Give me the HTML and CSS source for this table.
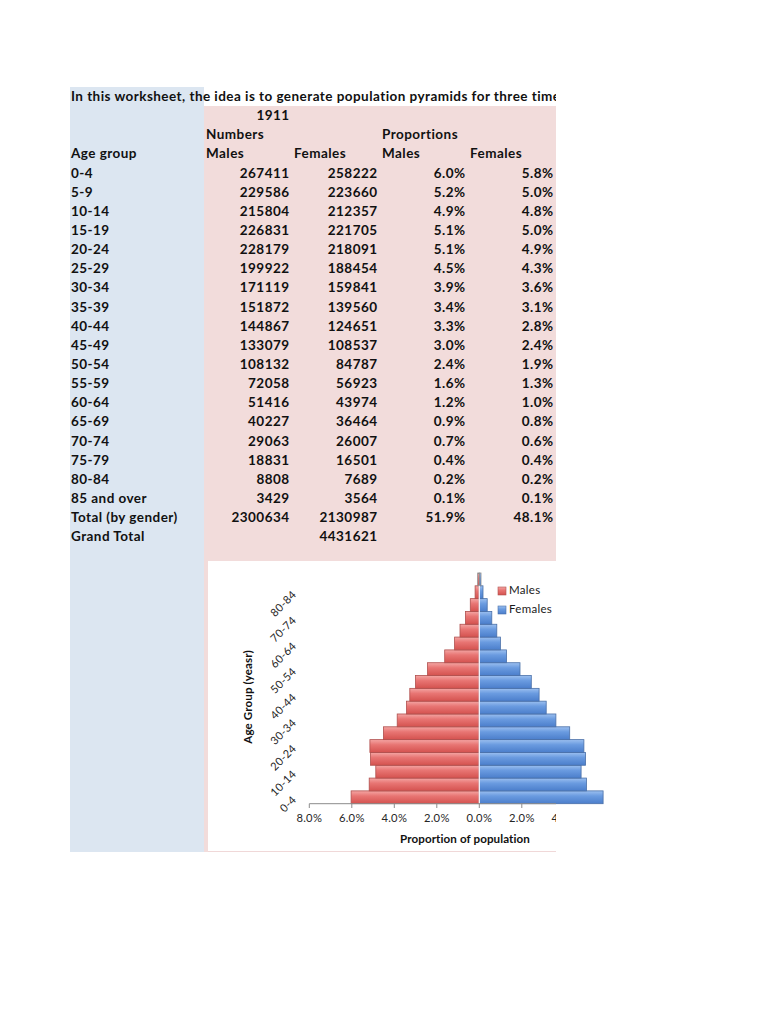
FILE: index.html
```html
<!DOCTYPE html>
<html>
<head>
<meta charset="utf-8">
<link rel="stylesheet" href="styles.css">
</head>
<body>
<div class="sheet">
  <div class="row title"><div class="c a">In this worksheet, the idea is to generate population pyramids for three time</div><div class="c"></div><div class="c"></div><div class="c"></div><div class="c"></div></div>
  <div class="row"><div class="c a"></div><div class="c p r">1911</div><div class="c p"></div><div class="c p"></div><div class="c p"></div></div>
  <div class="row"><div class="c a"></div><div class="c p">Numbers</div><div class="c p"></div><div class="c p">Proportions</div><div class="c p"></div></div>
  <div class="row"><div class="c a">Age group</div><div class="c p">Males</div><div class="c p">Females</div><div class="c p">Males</div><div class="c p">Females</div></div>
  <div class="row"><div class="c a">0-4</div><div class="c p r">267411</div><div class="c p r">258222</div><div class="c p r">6.0%</div><div class="c p r">5.8%</div></div>
  <div class="row"><div class="c a">5-9</div><div class="c p r">229586</div><div class="c p r">223660</div><div class="c p r">5.2%</div><div class="c p r">5.0%</div></div>
  <div class="row"><div class="c a">10-14</div><div class="c p r">215804</div><div class="c p r">212357</div><div class="c p r">4.9%</div><div class="c p r">4.8%</div></div>
  <div class="row"><div class="c a">15-19</div><div class="c p r">226831</div><div class="c p r">221705</div><div class="c p r">5.1%</div><div class="c p r">5.0%</div></div>
  <div class="row"><div class="c a">20-24</div><div class="c p r">228179</div><div class="c p r">218091</div><div class="c p r">5.1%</div><div class="c p r">4.9%</div></div>
  <div class="row"><div class="c a">25-29</div><div class="c p r">199922</div><div class="c p r">188454</div><div class="c p r">4.5%</div><div class="c p r">4.3%</div></div>
  <div class="row"><div class="c a">30-34</div><div class="c p r">171119</div><div class="c p r">159841</div><div class="c p r">3.9%</div><div class="c p r">3.6%</div></div>
  <div class="row"><div class="c a">35-39</div><div class="c p r">151872</div><div class="c p r">139560</div><div class="c p r">3.4%</div><div class="c p r">3.1%</div></div>
  <div class="row"><div class="c a">40-44</div><div class="c p r">144867</div><div class="c p r">124651</div><div class="c p r">3.3%</div><div class="c p r">2.8%</div></div>
  <div class="row"><div class="c a">45-49</div><div class="c p r">133079</div><div class="c p r">108537</div><div class="c p r">3.0%</div><div class="c p r">2.4%</div></div>
  <div class="row"><div class="c a">50-54</div><div class="c p r">108132</div><div class="c p r">84787</div><div class="c p r">2.4%</div><div class="c p r">1.9%</div></div>
  <div class="row"><div class="c a">55-59</div><div class="c p r">72058</div><div class="c p r">56923</div><div class="c p r">1.6%</div><div class="c p r">1.3%</div></div>
  <div class="row"><div class="c a">60-64</div><div class="c p r">51416</div><div class="c p r">43974</div><div class="c p r">1.2%</div><div class="c p r">1.0%</div></div>
  <div class="row"><div class="c a">65-69</div><div class="c p r">40227</div><div class="c p r">36464</div><div class="c p r">0.9%</div><div class="c p r">0.8%</div></div>
  <div class="row"><div class="c a">70-74</div><div class="c p r">29063</div><div class="c p r">26007</div><div class="c p r">0.7%</div><div class="c p r">0.6%</div></div>
  <div class="row"><div class="c a">75-79</div><div class="c p r">18831</div><div class="c p r">16501</div><div class="c p r">0.4%</div><div class="c p r">0.4%</div></div>
  <div class="row"><div class="c a">80-84</div><div class="c p r">8808</div><div class="c p r">7689</div><div class="c p r">0.2%</div><div class="c p r">0.2%</div></div>
  <div class="row"><div class="c a">85 and over</div><div class="c p r">3429</div><div class="c p r">3564</div><div class="c p r">0.1%</div><div class="c p r">0.1%</div></div>
  <div class="row"><div class="c a">Total (by gender)</div><div class="c p r">2300634</div><div class="c p r">2130987</div><div class="c p r">51.9%</div><div class="c p r">48.1%</div></div>
  <div class="row"><div class="c a">Grand Total</div><div class="c p"></div><div class="c p r">4431621</div><div class="c p"></div><div class="c p"></div></div>
  <div class="lower">
    <div class="a lower-a"></div>
    <div class="lower-p">
      <div class="chart">
        <svg class="pyramid" width="348" height="290" viewBox="0 0 348 290">
          <defs>
            <linearGradient id="gm" x1="0" y1="0" x2="0" y2="1">
              <stop offset="0" stop-color="#f4a6a4"/>
              <stop offset="0.4" stop-color="#e87573"/>
              <stop offset="1" stop-color="#d4524f"/>
            </linearGradient>
            <linearGradient id="gf" x1="0" y1="0" x2="0" y2="1">
              <stop offset="0" stop-color="#9cc0f0"/>
              <stop offset="0.4" stop-color="#6a9be0"/>
              <stop offset="1" stop-color="#4b7ecb"/>
            </linearGradient>
            <clipPath id="clip"><rect x="0" y="0" width="348" height="290"/></clipPath>
          </defs>
          <g class="males" fill="url(#gm)" stroke="#b0504e" stroke-width="0.8">
            <rect x="143.1" y="229.88" width="128.2" height="12.82"/>
            <rect x="161.2" y="217.07" width="110.1" height="12.82"/>
            <rect x="167.8" y="204.25" width="103.5" height="12.82"/>
            <rect x="162.5" y="191.43" width="108.8" height="12.82"/>
            <rect x="161.9" y="178.62" width="109.4" height="12.82"/>
            <rect x="175.4" y="165.80" width="95.9" height="12.82"/>
            <rect x="189.2" y="152.98" width="82.1" height="12.82"/>
            <rect x="198.5" y="140.16" width="72.8" height="12.82"/>
            <rect x="201.8" y="127.35" width="69.5" height="12.82"/>
            <rect x="207.5" y="114.53" width="63.8" height="12.82"/>
            <rect x="219.5" y="101.71" width="51.8" height="12.82"/>
            <rect x="236.7" y="88.90" width="34.6" height="12.82"/>
            <rect x="246.6" y="76.08" width="24.7" height="12.82"/>
            <rect x="252.0" y="63.26" width="19.3" height="12.82"/>
            <rect x="257.4" y="50.44" width="13.9" height="12.82"/>
            <rect x="262.3" y="37.63" width="9.0" height="12.82"/>
            <rect x="267.1" y="24.81" width="4.2" height="12.82"/>
            <rect x="269.7" y="11.99" width="1.6" height="12.82" stroke="#8a8a8a"/>
          </g>
          <g class="females" fill="url(#gf)" stroke="#4a70a8" stroke-width="0.8">
            <rect x="271.3" y="229.88" width="123.8" height="12.82"/>
            <rect x="271.3" y="217.07" width="107.2" height="12.82"/>
            <rect x="271.3" y="204.25" width="101.8" height="12.82"/>
            <rect x="271.3" y="191.43" width="106.3" height="12.82"/>
            <rect x="271.3" y="178.62" width="104.6" height="12.82"/>
            <rect x="271.3" y="165.80" width="90.4" height="12.82"/>
            <rect x="271.3" y="152.98" width="76.6" height="12.82"/>
            <rect x="271.3" y="140.16" width="66.9" height="12.82"/>
            <rect x="271.3" y="127.35" width="59.8" height="12.82"/>
            <rect x="271.3" y="114.53" width="52.0" height="12.82"/>
            <rect x="271.3" y="101.71" width="40.7" height="12.82"/>
            <rect x="271.3" y="88.90" width="27.3" height="12.82"/>
            <rect x="271.3" y="76.08" width="21.1" height="12.82"/>
            <rect x="271.3" y="63.26" width="17.5" height="12.82"/>
            <rect x="271.3" y="50.44" width="12.5" height="12.82"/>
            <rect x="271.3" y="37.63" width="7.9" height="12.82"/>
            <rect x="271.3" y="24.81" width="3.7" height="12.82"/>
            <rect x="271.3" y="11.99" width="1.7" height="12.82" stroke="#8a8a8a"/>
          </g>
          <line x1="271.3" y1="24.8" x2="271.3" y2="242.7" stroke="#ffffff" stroke-width="1.2"/>
          <g clip-path="url(#clip)">
            <line x1="101.3" y1="242.7" x2="348" y2="242.7" stroke="#8c8c8c" stroke-width="1"/>
            <g stroke="#8c8c8c" stroke-width="1">
              <line x1="101.3" y1="242.7" x2="101.3" y2="247"/>
              <line x1="143.8" y1="242.7" x2="143.8" y2="247"/>
              <line x1="186.3" y1="242.7" x2="186.3" y2="247"/>
              <line x1="228.8" y1="242.7" x2="228.8" y2="247"/>
              <line x1="271.3" y1="242.7" x2="271.3" y2="247"/>
              <line x1="313.8" y1="242.7" x2="313.8" y2="247"/>
            </g>
            <g class="tick" text-anchor="middle">
              <text x="101.3" y="261">8.0%</text>
              <text x="143.8" y="261">6.0%</text>
              <text x="186.3" y="261">4.0%</text>
              <text x="228.8" y="261">2.0%</text>
              <text x="271.3" y="261">0.0%</text>
              <text x="313.8" y="261">2.0%</text>
              <text x="356.3" y="261">4.0%</text>
            </g>
          </g>
          <g class="cat" text-anchor="end">
            <text x="89" y="239.5" transform="rotate(-45 89 239.5)">0-4</text>
            <text x="89" y="213.9" transform="rotate(-45 89 213.9)">10-14</text>
            <text x="89" y="188.2" transform="rotate(-45 89 188.2)">20-24</text>
            <text x="89" y="162.6" transform="rotate(-45 89 162.6)">30-34</text>
            <text x="89" y="137.0" transform="rotate(-45 89 137.0)">40-44</text>
            <text x="89" y="111.3" transform="rotate(-45 89 111.3)">50-54</text>
            <text x="89" y="85.7" transform="rotate(-45 89 85.7)">60-64</text>
            <text x="89" y="60.0" transform="rotate(-45 89 60.0)">70-74</text>
            <text x="89" y="34.4" transform="rotate(-45 89 34.4)">80-84</text>
          </g>
          <text class="axis-title" x="44" y="136" text-anchor="middle" transform="rotate(-90 44 136)">Age Group (yeasr)</text>
          <text class="axis-title" x="257" y="282" text-anchor="middle">Proportion of population</text>
          <g class="legend">
            <rect x="290" y="26" width="8" height="8" fill="url(#gm)" stroke="#b0504e" stroke-width="0.6"/>
            <text x="301" y="33">Males</text>
            <rect x="290" y="45" width="8" height="8" fill="url(#gf)" stroke="#4a70a8" stroke-width="0.6"/>
            <text x="301" y="52">Females</text>
          </g>
        </svg>
      </div>
    </div>
  </div>
</div>
</body>
</html>
```

FILE: styles.css
```css
html, body {
  margin: 0;
  padding: 0;
  background: #ffffff;
}

body {
  font-family: "Lato", "Liberation Sans", sans-serif;
  color: #111111;
}

.sheet {
  margin-left: 70px;
  padding-top: 87px;
  width: 486px;
}

.row {
  display: grid;
  grid-template-columns: 134px 88px 88px 88px 88px;
  height: 19.15px;
  font-weight: 700;
  font-size: 13.5px;
  line-height: 19.15px;
  letter-spacing: 0.45px;
}

.title {
  overflow: hidden;
}

.c {
  white-space: nowrap;
  padding: 0 3px 0 1px;
  overflow: visible;
}

.a {
  background: #dce6f1;
}

.p {
  background: #f2dcdb;
}

.r {
  text-align: right;
}

.row .p {
  padding-left: 2px;
}

.row .r {
  padding-right: 2.5px;
}

.lower {
  display: flex;
  height: 305.4px;
}

.lower-a {
  width: 134px;
  flex: none;
}

.lower-p {
  width: 352px;
  background: #f2dcdb;
  padding-top: 14.4px;
  padding-left: 4px;
  box-sizing: border-box;
  display: flex;
  flex-direction: column;
}

.chart {
  flex: 1;
  width: 348px;
  background: #ffffff;
  border-bottom: 1px solid #f0d8d8;
}

.pyramid {
  display: block;
  overflow: visible;
  font-family: "Lato", "Liberation Sans", sans-serif;
}

.tick text {
  font-size: 11.2px;
  fill: #262626;
  letter-spacing: 0.3px;
}

.cat text {
  font-size: 11px;
  fill: #262626;
  letter-spacing: 0.3px;
}

.axis-title {
  font-size: 11.6px;
  font-weight: 700;
  fill: #111111;
  letter-spacing: 0.1px;
}

.legend text {
  font-size: 11.5px;
  fill: #1a1a1a;
  letter-spacing: 0.3px;
}
```
